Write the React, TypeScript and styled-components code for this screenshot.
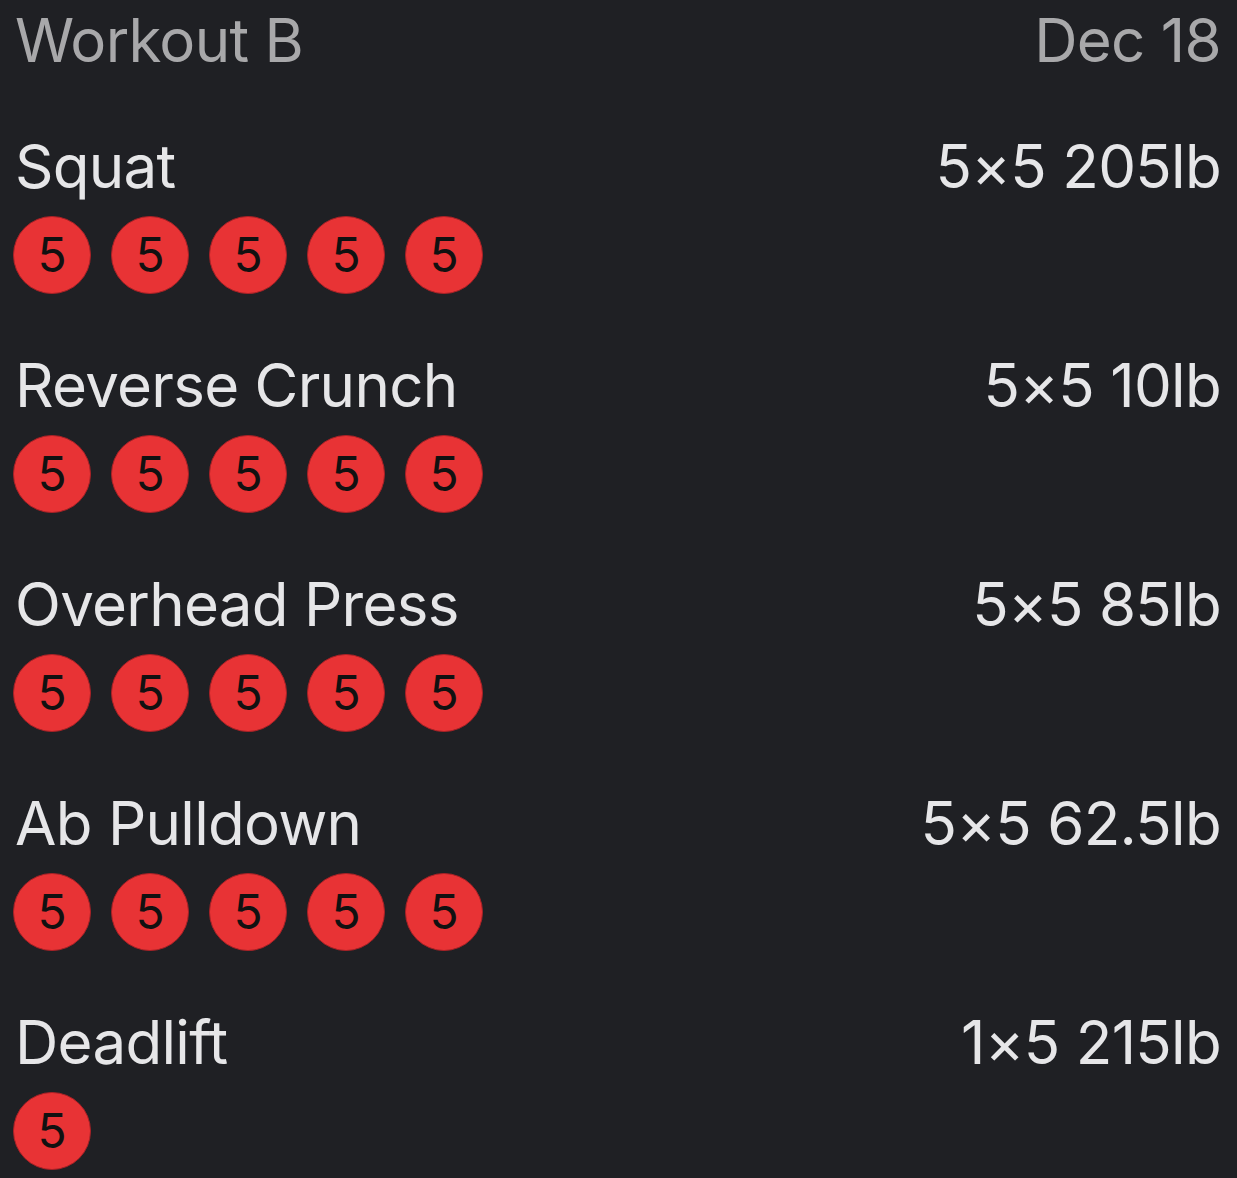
import React from 'react';
import styled, { createGlobalStyle } from 'styled-components';

const GlobalStyle = createGlobalStyle`
  html, body {
    margin: 0;
    padding: 0;
    background: #1f2024;
  }
  body {
    font-family: Inter, "Noto Sans", sans-serif;
  }
`;

const Page = styled.main`
  display: flex;
  flex-direction: column;
  padding: 4px 16px 0 15px;
  min-height: 100vh;
  box-sizing: border-box;
  background: #1f2024;
`;

const Header = styled.header`
  display: flex;
  justify-content: space-between;
  align-items: baseline;
  margin-bottom: 54px;
  color: #a8a8aa;
  font-size: 60px;
  line-height: 72px;
  letter-spacing: -0.7px;
`;

const Exercise = styled.section`
  display: flex;
  flex-direction: column;
  gap: 14px;
  margin-bottom: 55px;
`;

const TitleRow = styled.div`
  display: flex;
  justify-content: space-between;
  align-items: baseline;
  color: #e6e6e8;
  font-size: 60px;
  line-height: 72px;
  letter-spacing: -0.7px;
`;

const Sets = styled.div`
  display: flex;
  gap: 20px;
  margin-left: -2px;
`;

const Rep = styled.div`
  width: 78px;
  height: 78px;
  box-sizing: border-box;
  border-radius: 50%;
  background: #e83335;
  border: 1.5px solid #a82126;
  display: flex;
  align-items: center;
  justify-content: center;
  color: #111;
  font-size: 48px;
  line-height: 1;
`;

type Lift = { name: string; scheme: string; sets: number[] };

const lifts: Lift[] = [
  { name: 'Squat', scheme: '5×5 205lb', sets: [5, 5, 5, 5, 5] },
  { name: 'Reverse Crunch', scheme: '5×5 10lb', sets: [5, 5, 5, 5, 5] },
  { name: 'Overhead Press', scheme: '5×5 85lb', sets: [5, 5, 5, 5, 5] },
  { name: 'Ab Pulldown', scheme: '5×5 62.5lb', sets: [5, 5, 5, 5, 5] },
  { name: 'Deadlift', scheme: '1×5 215lb', sets: [5] },
];

function App() {
  return (
    <Page>
      <GlobalStyle />
      <Header>
        <span>Workout B</span>
        <span>Dec 18</span>
      </Header>
      {lifts.map((lift) => (
        <Exercise key={lift.name}>
          <TitleRow>
            <span>{lift.name}</span>
            <span>{lift.scheme}</span>
          </TitleRow>
          <Sets>
            {lift.sets.map((reps, i) => (
              <Rep key={`${lift.name}-${i}`}>{reps}</Rep>
            ))}
          </Sets>
        </Exercise>
      ))}
    </Page>
  );
}

export default App;
